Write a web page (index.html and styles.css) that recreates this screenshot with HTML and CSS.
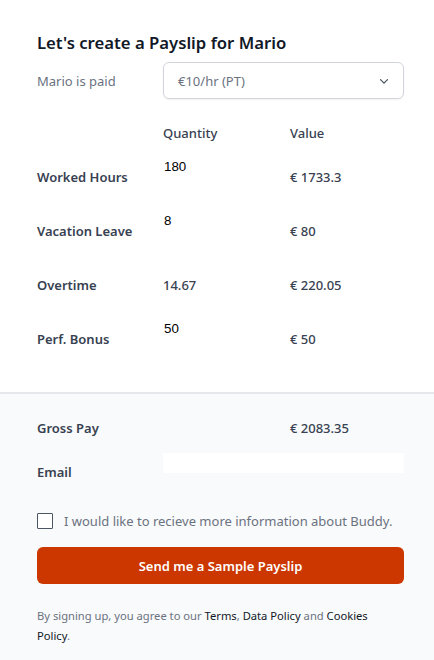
FILE: index.html
```html
<!DOCTYPE html>
<html lang="en">
<head>
  <meta charset="UTF-8">
  <meta name="viewport" content="width=device-width, initial-scale=1.0">
  <title>Payslip</title>
  <link rel="stylesheet" href="styles.css">
</head>
<body>
  <div class="calc">
    <div class="top">
      <h2 class="title">Let's create a Payslip for Mario</h2>
      <div class="paid-row">
        <div class="paid-label">Mario is paid</div>
        <div class="select">
          <span>€10/hr (PT)</span>
          <svg width="14" height="14" viewBox="0 0 20 20" fill="none" stroke="#4b5563" stroke-width="1.8" stroke-linecap="round" stroke-linejoin="round"><path d="M5 8l5 5 5-5"/></svg>
        </div>
      </div>

      <div class="grid">
        <div></div>
        <div class="head">Quantity</div>
        <div class="head">Value</div>

        <div class="label">Worked Hours</div>
        <div><input class="qty" value="180"></div>
        <div class="val">€ 1733.3</div>

        <div class="label">Vacation Leave</div>
        <div><input class="qty" value="8"></div>
        <div class="val">€ 80</div>

        <div class="label">Overtime</div>
        <div class="val">14.67</div>
        <div class="val">€ 220.05</div>

        <div class="label">Perf. Bonus</div>
        <div><input class="qty" value="50"></div>
        <div class="val">€ 50</div>
      </div>
    </div>

    <div class="bottom">
      <div class="gross">
        <div class="label">Gross Pay</div>
        <div class="val">€ 2083.35</div>
      </div>
      <div class="email-row">
        <div class="label">Email</div>
        <input class="email" type="email">
      </div>
      <label class="check">
        <span class="box"></span>
        I would like to recieve more information about Buddy.
      </label>
      <button class="send">Send me a Sample Payslip</button>
      <p class="legal">By signing up, you agree to our <a>Terms</a>, <a>Data Policy</a> and <a>Cookies Policy</a>.</p>
    </div>
  </div>
</body>
</html>
```

FILE: styles.css
```css
* {
  box-sizing: border-box;
  margin: 0;
  padding: 0;
}

body {
  font-family: "Noto Sans", "Open Sans", sans-serif;
  background-color: #f9fafb;
  color: #374151;
}

.calc {
  min-height: 660px;
  display: flex;
  flex-direction: column;
}

.top {
  background-color: #fff;
  padding: 31px 30px 26px 37px;
}

.title {
  font-size: 16.7px;
  font-weight: 600;
  color: #111827;
  line-height: 24px;
}

.paid-row {
  display: flex;
  align-items: center;
  margin-top: 7px;
}

.paid-label {
  width: 126px;
  font-size: 13px;
  color: #6b7280;
}

.select {
  flex: 1;
  height: 37px;
  border: 1px solid #d1d5db;
  border-radius: 6px;
  display: flex;
  align-items: center;
  justify-content: space-between;
  padding: 0 12px 0 14px;
  font-size: 13px;
  color: #6b7280;
  box-shadow: 0 1px 2px rgba(0,0,0,0.05);
}

.grid {
  display: grid;
  grid-template-columns: 126px 127px 1fr;
  grid-template-rows: 34px;
  grid-auto-rows: 54px;
  margin-top: 17px;
}

.grid .head {
  font-size: 13px;
  font-weight: 500;
  color: #374151;
  line-height: 34px;
}

.label {
  font-size: 13px;
  font-weight: 600;
  color: #374151;
  display: flex;
  align-items: center;
}

.val {
  font-size: 13px;
  font-weight: 500;
  color: #374151;
  display: flex;
  align-items: center;
}

.qty {
  border: none;
  background: transparent;
  font-family: "Liberation Sans", Arial, sans-serif;
  font-size: 13.33px;
  color: #000;
  width: 100px;
  padding: 9px 0 0 1px;
  outline: none;
}

.bottom {
  flex: 1;
  background-color: #f9fafb;
  border-top: 2px solid #e5e7eb;
  padding: 22px 30px 20px 37px;
}

.gross {
  display: grid;
  grid-template-columns: 253px 1fr;
  line-height: 24px;
}

.email-row {
  display: grid;
  grid-template-columns: 126px 1fr;
  height: 42px;
}

.email-row .label {
  align-items: flex-end;
  padding-bottom: 1px;
}

.email {
  border: none;
  background: #fff;
  height: 20px;
  margin-top: 13px;
  width: 100%;
}

.check {
  display: flex;
  align-items: center;
  gap: 11px;
  margin-top: 30px;
  font-size: 13px;
  line-height: 18px;
  color: #6b7280;
}

.box {
  width: 16px;
  height: 16px;
  border: 1px solid #4b5563;
  border-radius: 1px;
  background: #fff;
}

.send {
  display: block;
  width: 100%;
  height: 37px;
  margin-top: 17px;
  border: none;
  border-radius: 6px;
  background-color: #cc3700;
  color: #fff;
  font-family: inherit;
  font-size: 13px;
  font-weight: 600;
}

.legal {
  margin-top: 22px;
  max-width: 350px;
  font-size: 11.2px;
  line-height: 20px;
  color: #6b7280;
}

.legal a {
  color: #111827;
}
```
